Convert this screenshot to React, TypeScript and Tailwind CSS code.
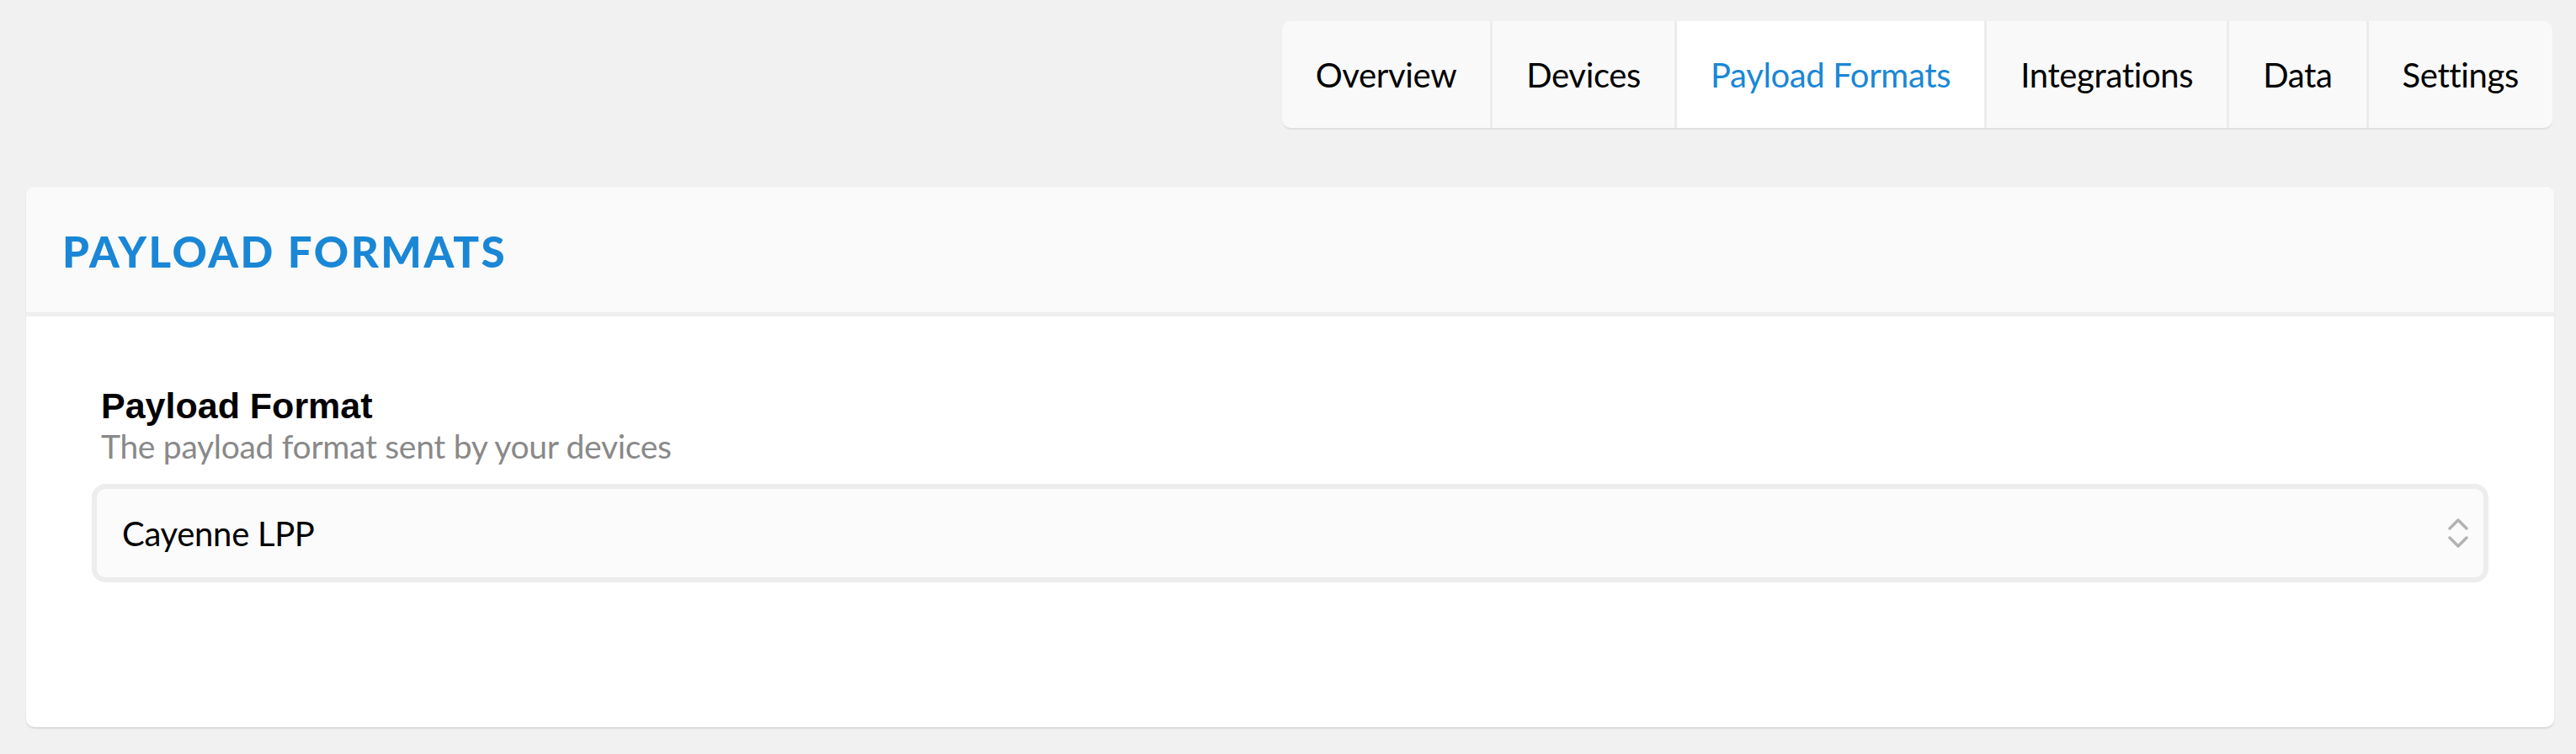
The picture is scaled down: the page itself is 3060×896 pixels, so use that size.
const tabs = ["Overview", "Devices", "Payload Formats", "Integrations", "Data", "Settings"]

function Chevrons() {
  return (
    <svg width="24" height="38" viewBox="0 0 24 38" fill="none" stroke="#b3b3b3" strokeWidth="3.5" strokeLinecap="round" strokeLinejoin="round">
      <path d="M2 13 L12 3 L22 13" />
      <path d="M2 24 L12 34 L22 24" />
    </svg>
  )
}

export default function App() {
  const active = "Payload Formats"

  return (
    <div className="min-h-[896px] bg-[#f1f1f1] pl-[31px] pr-[28px] pt-[25px] font-['Lato',sans-serif]">
      {/* top tabs */}
      <div className="flex justify-end">
        <nav className="flex h-[127px] overflow-hidden rounded-[10px] bg-[#f9f9f9] shadow-[0_2px_1px_rgba(0,0,0,0.07)]">
          {tabs.map((tab, index) => (
            <a
              key={tab}
              className={`flex items-center px-[40px] text-[40px] tracking-[-0.35px] ${index > 0 ? "border-l-[3px] border-[#ececec]" : ""} ${
                tab === active ? "bg-white text-[#1a87d6]" : "text-black"
              }`}
            >
              {tab}
            </a>
          ))}
        </nav>
      </div>

      {/* payload formats card */}
      <div className="mt-[70px] mr-[-2px] overflow-hidden rounded-[10px] bg-white shadow-[0_2px_2px_rgba(0,0,0,0.1)]">
        <div className="flex h-[154px] items-center border-b-[5px] border-[#efefef] bg-[#fafafa] pl-[43px] pt-[6px]">
          <h2 className="text-[51px] font-black uppercase tracking-[0.05em] text-[#1a87d6]">Payload Formats</h2>
        </div>
        <div className="px-[78px] pt-[81px] pb-[172px]">
          <div className="pl-[11px]">
            <div className="text-[43px] leading-[1.17] font-bold text-black font-['Liberation_Sans',sans-serif]">Payload Format</div>
            <div className="text-[39px] leading-[1.23] tracking-[-0.3px] text-[#898989]">The payload format sent by your devices</div>
          </div>
          <div className="mt-[20px] flex h-[117px] items-center justify-between rounded-[16px] border-[6px] border-[#ededed] bg-[#fbfbfb] pl-[30px] pr-[18px]">
            <span className="text-[40px] tracking-[-0.3px] text-black">Cayenne LPP</span>
            <Chevrons />
          </div>
        </div>
      </div>
    </div>
  )
}
